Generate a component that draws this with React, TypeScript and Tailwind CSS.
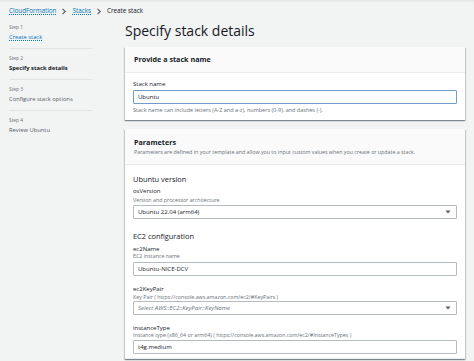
import React from 'react';

const Chevron: React.FC = () => (
    <svg width="6" height="7" viewBox="0 0 6 7" className="mx-[5px]">
        <path d="M1.5 0.8 L4.3 3.5 L1.5 6.2" fill="none" stroke="#545b64" strokeWidth="1.1" />
    </svg>
);

const Caret: React.FC = () => (
    <svg width="6" height="4" viewBox="0 0 6 4">
        <path d="M0.5 0.5 L5.5 0.5 L3 3.5 Z" fill="#545b64" />
    </svg>
);

const steps = [
    { step: 'Step 1', label: 'Create stack', state: 'link' },
    { step: 'Step 2', label: 'Specify stack details', state: 'active' },
    { step: 'Step 3', label: 'Configure stack options', state: 'idle' },
    { step: 'Step 4', label: 'Review Ubuntu', state: 'idle' },
];

const Field: React.FC<{ label: string, hint?: string, className?: string, children: React.ReactNode }> = ({ label, hint, className, children }) => (
    <div className={className}>
        <div className="text-[6px] leading-[8px] text-[#16191f]">{label}</div>
        {hint && <div className="text-[5.3px] leading-[6px] text-[#687078]">{hint}</div>}
        {children}
    </div>
);

const TextBox: React.FC<{ value: string, className?: string }> = ({ value, className }) => (
    <div className={`h-[14px] border border-[#b4bcc0] rounded-[1px] bg-white px-[4px] flex items-center text-[6px] text-[#16191f] ${className || ''}`}>
        {value}
    </div>
);

const SelectBox: React.FC<{ value: string, placeholder?: boolean, className?: string }> = ({ value, placeholder, className }) => (
    <div className={`h-[14px] border border-[#b4bcc0] rounded-[1px] bg-white pl-[4px] pr-[5px] flex items-center justify-between text-[6px] ${className || ''}`}>
        <span className={placeholder ? 'italic text-[#687078]' : 'text-[#16191f]'}>{value}</span>
        <Caret />
    </div>
);

const cardShadow = 'shadow-[0_1px_1px_rgba(0,28,36,0.3),1px_1px_1px_rgba(0,28,36,0.15),-1px_1px_1px_rgba(0,28,36,0.15)]';

export default function App() {
    return (
        <div className="w-[474px] h-[361px] overflow-hidden bg-[#f2f3f3] text-[#16191f] shadow-[inset_0_3px_3px_-2px_rgba(0,0,0,0.08)]" style={{ fontFamily: '"Open Sans", "Noto Sans", sans-serif' }}>
            {/* Breadcrumbs */}
            <div className="h-[18px] pl-[9px] pt-[6px] flex items-start text-[6.3px] leading-[10px]">
                <span className="text-[#0073bb] underline decoration-dotted underline-offset-[1px]">CloudFormation</span>
                <span className="h-[10px] flex items-center"><Chevron /></span>
                <span className="text-[#0073bb] underline decoration-dotted underline-offset-[1px]">Stacks</span>
                <span className="h-[10px] flex items-center"><Chevron /></span>
                <span className="text-[#16191f]">Create stack</span>
            </div>

            <div className="flex">
                {/* Wizard steps */}
                <div className="w-[83px] ml-[9px] shrink-0">
                    {steps.map((s, i) => (
                        <div key={s.step} className={`pt-[5px] pb-[6px] ${i < steps.length - 1 ? 'border-b border-[#dfe3e4]' : ''}`}>
                            <div className="text-[4.8px] leading-[8px] text-[#687078]">{s.step}</div>
                            <div className={`mt-[1px] text-[5.8px] leading-[10px] ${s.state === 'link' ? 'text-[#0073bb] underline decoration-dotted underline-offset-[1px]' : s.state === 'active' ? 'font-bold text-[#16191f]' : 'text-[#545b64]'}`}>
                                {s.label}
                            </div>
                        </div>
                    ))}
                </div>

                {/* Main content */}
                <div className="ml-[33px] w-[340px] shrink-0">
                    <h1 className="text-[14px] leading-[16px] mt-[5px] mb-[8px] text-[#16191f]">Specify stack details</h1>

                    <div className={`bg-white ${cardShadow}`}>
                        <div className="h-[26px] bg-[#fafafa] border-b border-[#eaeded] px-[9px] flex items-center">
                            <span className="text-[7.2px] font-bold">Provide a stack name</span>
                        </div>
                        <div className="px-[8px] pt-[7px] pb-[7px]">
                            <div className="text-[6px] leading-[8px]">Stack name</div>
                            <div className="mt-[2px] h-[14px] border border-[#6f9bc6] rounded-[1px] bg-[#fbfdff] px-[4px] flex items-center text-[6px]">Ubuntu</div>
                            <div className="mt-[3px] text-[5.5px] leading-[6px] text-[#687078]">Stack name can include letters (A-Z and a-z), numbers (0-9), and dashes (-).</div>
                        </div>
                    </div>

                    <div className={`mt-[9px] bg-white ${cardShadow}`}>
                        <div className="bg-[#fafafa] border-b border-[#eaeded] px-[9px] pt-[8px] pb-[9px]">
                            <div className="text-[7.2px] leading-[10px] font-bold">Parameters</div>
                            <div className="mt-[2px] text-[5.3px] leading-[6px] text-[#687078]">Parameters are defined in your template and allow you to input custom values when you create or update a stack.</div>
                        </div>
                        <div className="px-[8px] pt-[8px] pb-[4px] border-b border-[#eaeded]">
                            <div className="text-[7.4px] leading-[12px] text-[#16191f]">Ubuntu version</div>
                            <Field label="osVersion" className="mt-[2px]">
                                <div className="mt-[2px] text-[5.3px] leading-[6px] text-[#687078]">Version and processor architecture</div>
                                <SelectBox value="Ubuntu 22.04 (arm64)" className="mt-[2px]" />
                            </Field>

                            <div className="mt-[11px] text-[7.4px] leading-[12px] text-[#16191f]">EC2 configuration</div>
                            <Field label="ec2Name" hint="EC2 instance name" className="mt-[3px]">
                                <TextBox value="Ubuntu-NICE-DCV" className="mt-[3px]" />
                            </Field>
                            <Field label="ec2KeyPair" className="mt-[9px]">
                                <div className="mt-[1px] text-[5.3px] leading-[6px] text-[#687078]">Key Pair ( https://console.aws.amazon.com/ec2/#KeyPairs )</div>
                                <SelectBox value="Select AWS::EC2::KeyPair::KeyName" placeholder className="mt-[1px]" />
                            </Field>
                            <Field label="instanceType" hint="Instance type (x86_64 or arm64) ( https://console.aws.amazon.com/ec2/#InstanceTypes )" className="mt-[9px]">
                                <TextBox value="t4g.medium" className="mt-[2px]" />
                            </Field>
                        </div>
                    </div>
                </div>
            </div>
        </div>
    );
}
